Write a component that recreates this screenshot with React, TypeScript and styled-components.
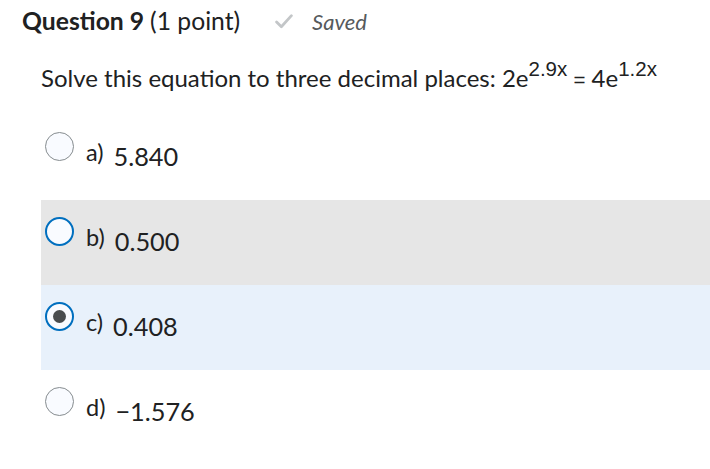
import styled, { createGlobalStyle } from 'styled-components';

const GlobalStyle = createGlobalStyle`
  html, body {
    margin: 0;
    padding: 0;
    background: #ffffff;
  }
  body {
    font-family: Lato, 'Open Sans', sans-serif;
    color: #202122;
  }
`;

const Page = styled.div`
  width: 710px;
  height: 469px;
  overflow: hidden;
  background: #fff;
`;

const Header = styled.div`
  display: flex;
  align-items: center;
  padding: 6px 0 0 22px;
  height: 30px;
`;

const Title = styled.h2`
  margin: 0;
  font-size: 24.7px;
  line-height: 30px;
  font-weight: 700;
  color: #202122;
  white-space: nowrap;
  span {
    font-weight: 400;
  }
`;

const SavedTag = styled.div`
  display: flex;
  align-items: center;
  gap: 19px;
  margin-left: 35px;
  font-size: 22px;
  font-style: italic;
  color: #565a5c;
`;

const Body = styled.div`
  padding-left: 41px;
`;

const Prompt = styled.p`
  margin: 27px 0 0;
  font-size: 24px;
  line-height: 30px;
  color: #202122;
  white-space: nowrap;
  sup {
    font-family: 'Liberation Sans', Arial, sans-serif;
    font-size: 20.5px;
    line-height: 0;
    vertical-align: 0.55em;
  }
  .eq {
    font-family: 'Liberation Sans', Arial, sans-serif;
    font-size: 20.5px;
  }
`;

const Options = styled.div`
  margin-top: 20px;
  display: flex;
  flex-direction: column;
`;

const Option = styled.label<{ $bg: string }>`
  display: flex;
  align-items: flex-start;
  height: 85px;
  padding: 17px 0 0 4px;
  box-sizing: border-box;
  background: ${(p) => p.$bg};
`;

const Radio = styled.span<{ $active: boolean; $checked: boolean }>`
  width: 29px;
  height: 29px;
  box-sizing: border-box;
  border-radius: 50%;
  background: #f9fbff;
  border: ${(p) => (p.$active ? '2px solid #006fbf' : '1px solid #868c8f')};
  display: flex;
  align-items: center;
  justify-content: center;
  flex-shrink: 0;
  &::after {
    content: '';
    display: ${(p) => (p.$checked ? 'block' : 'none')};
    width: 13px;
    height: 13px;
    border-radius: 50%;
    background: #494c4e;
  }
`;

const Letter = styled.span`
  margin-left: 12px;
  margin-top: 8px;
  font-size: 23.5px;
  line-height: 24px;
  color: #202122;
`;

const Value = styled.span`
  margin-left: 10px;
  margin-top: 11px;
  font-size: 25.3px;
  line-height: 26px;
  color: #202122;
`;

const Check = () => (
  <svg width="18" height="15" viewBox="0 0 17 14">
    <path d="M1.5 7.5 L6 12 L15.5 1.5" fill="none" stroke="#c3c6c8" strokeWidth="2.6" strokeLinecap="round" strokeLinejoin="round" />
  </svg>
);

const answers = [
  { letter: 'a)', value: '5.840', bg: 'transparent', active: false, checked: false },
  { letter: 'b)', value: '0.500', bg: '#e6e6e6', active: true, checked: false },
  { letter: 'c)', value: '0.408', bg: '#e8f1fb', active: true, checked: true },
  { letter: 'd)', value: '\u22121.576', bg: 'transparent', active: false, checked: false },
];

export default function App() {
  return (
    <Page>
      <GlobalStyle />
      <Header>
        <Title>
          Question 9 <span>(1 point)</span>
        </Title>
        <SavedTag>
          <Check />
          Saved
        </SavedTag>
      </Header>
      <Body>
        <Prompt>
          Solve this equation to three decimal places: 2e<sup>2.9x</sup> <span className="eq">=</span> 4e
          <sup>1.2x</sup>
        </Prompt>
        <Options>
          {answers.map((a) => (
            <Option key={a.letter} $bg={a.bg}>
              <Radio $active={a.active} $checked={a.checked} />
              <Letter>{a.letter}</Letter>
              <Value>{a.value}</Value>
            </Option>
          ))}
        </Options>
      </Body>
    </Page>
  );
}
